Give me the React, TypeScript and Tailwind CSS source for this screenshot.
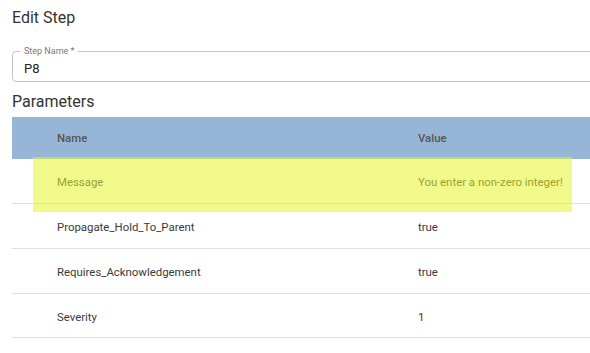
import React from "react";

const rows = [
  { name: "Message", value: "You enter a non-zero integer!" },
  { name: "Propagate_Hold_To_Parent", value: "true" },
  { name: "Requires_Acknowledgement", value: "true" },
  { name: "Severity", value: "1" },
];

export default function App() {
  return (
    <div className="w-[590px] h-[353px] overflow-hidden bg-white font-['Roboto',sans-serif]">
      <div className="relative w-[640px] pl-3 pt-[8px]">
        <h2 className="text-[16px] leading-[19px] text-[#333]">Edit Step</h2>

        {/* outlined text field */}
        <div className="relative mt-[24px] h-[31px] rounded-[4px] border border-[#c4c4c4]">
          <span className="absolute -top-[7px] left-[7px] bg-white px-[4px] text-[9px] leading-[12px] text-[#777]">
            Step Name *
          </span>
          <div className="pl-[11px] pt-[9px] text-[13px] leading-[15px] text-[#222]">P8</div>
        </div>

        <h3 className="mt-[10px] text-[16px] leading-[19px] text-[#333]">Parameters</h3>

        <div className="mt-[6px]">
          <div className="grid h-[42px] grid-cols-[45px_361px_1fr] items-center bg-[#97b5d6] pt-[1px] text-[11.4px] font-medium text-[#555]">
            <div />
            <div>Name</div>
            <div>Value</div>
          </div>
          {rows.map((r) => (
            <div
              key={r.name}
              className="grid h-[45px] grid-cols-[45px_361px_1fr] items-center border-b border-[#e0e0e0] pt-[4px] text-[11.4px] text-[#3a3a3a] last:h-[44px]"
            >
              <div />
              <div>{r.name}</div>
              <div>{r.value}</div>
            </div>
          ))}
        </div>

        {/* highlight overlay */}
        <div className="pointer-events-none absolute left-[33px] top-[157px] h-[55px] w-[539px] bg-[#e6f42a]/55" />
      </div>
    </div>
  );
}
